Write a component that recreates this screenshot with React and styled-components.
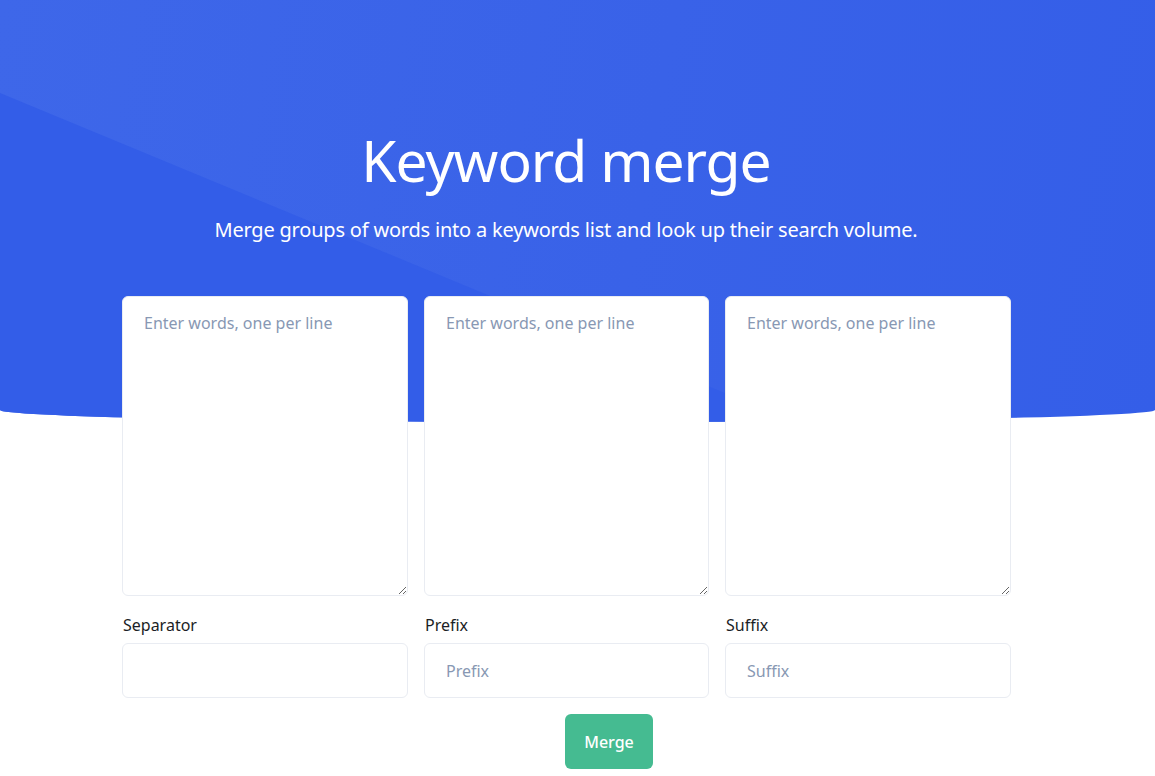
import React from "react";
import styled, { createGlobalStyle } from "styled-components";

const GlobalStyle = createGlobalStyle`
  html, body {
    margin: 0;
    padding: 0;
    background: #ffffff;
  }
  body {
    font-family: "Noto Sans", "Liberation Sans", sans-serif;
    color: #1f2430;
  }
  * { box-sizing: border-box; }
`;

const Page = styled.div`
  position: relative;
  min-height: 776px;
  overflow: hidden;
`;

const Hero = styled.header`
  position: relative;
  height: 422px;
  padding: 124px 23px 0 0;
  text-align: center;
  color: #ffffff;
  background: linear-gradient(100deg, #3e67e9 0%, #3962e8 55%, #345ee8 100%);
  border-radius: 0 0 50% 50% / 0 0 12px 12px;
  overflow: hidden;

  &::before {
    content: "";
    position: absolute;
    inset: 0;
    background: #335de8;
    clip-path: polygon(0 93px, 68.8% 100%, 0 100%);
  }
`;

const HeroText = styled.div`
  position: relative;
`;

const Title = styled.h1`
  margin: 0;
  font-size: 57px;
  line-height: 72px;
  font-weight: 400;
  letter-spacing: -1px;
`;

const Subtitle = styled.p`
  margin: 20px 0 0;
  font-size: 20px;
  line-height: 28px;
  font-weight: 400;
  letter-spacing: -0.2px;
`;

const Form = styled.form`
  position: relative;
  width: 888px;
  margin: -126px 0 0 122px;
`;

const Columns = styled.div`
  display: grid;
  grid-template-columns: 286px 285px 286px;
  column-gap: 16px;
`;

const Field = styled.div`
  display: flex;
  flex-direction: column;
`;

const WordsBox = styled.textarea`
  display: block;
  width: 100%;
  height: 300px;
  padding: 14px 21px;
  border: 1px solid #e9ecf2;
  border-radius: 6px;
  background: #ffffff;
  font-family: inherit;
  font-size: 16px;
  line-height: 24px;
  color: #1f2430;
  resize: vertical;
  outline: none;

  &::placeholder {
    color: #8898b3;
  }
`;

const Label = styled.label`
  margin: 18px 0 0 1px;
  font-size: 16px;
  line-height: 22px;
  color: #1b1e25;
`;

const TextInput = styled.input`
  display: block;
  width: 100%;
  height: 55px;
  margin-top: 7px;
  padding: 0 21px;
  border: 1px solid #e9ecf2;
  border-radius: 6px;
  background: #ffffff;
  font-family: inherit;
  font-size: 16px;
  color: #1f2430;
  outline: none;

  &::placeholder {
    color: #8898b3;
  }
`;

const Actions = styled.div`
  display: flex;
  padding: 16px 0 0 443px;
`;

const MergeButton = styled.button`
  width: 88px;
  height: 55px;
  border: none;
  border-radius: 6px;
  background: #45bb91;
  color: #ffffff;
  font-family: inherit;
  font-size: 16px;
  font-weight: 500;
  cursor: pointer;
`;

const groups = [0, 1, 2];

const extras = [
  { id: "separator", label: "Separator", placeholder: "" },
  { id: "prefix", label: "Prefix", placeholder: "Prefix" },
  { id: "suffix", label: "Suffix", placeholder: "Suffix" },
];

export default function App() {
  return (
    <Page>
      <GlobalStyle />
      <Hero>
        <HeroText>
          <Title>Keyword merge</Title>
          <Subtitle>
            Merge groups of words into a keywords list and look up their search volume.
          </Subtitle>
        </HeroText>
      </Hero>
      <Form onSubmit={(e) => e.preventDefault()}>
        <Columns>
          {groups.map((g) => (
            <WordsBox key={g} placeholder="Enter words, one per line" />
          ))}
          {extras.map((f) => (
            <Field key={f.id}>
              <Label htmlFor={f.id}>{f.label}</Label>
              <TextInput id={f.id} placeholder={f.placeholder} />
            </Field>
          ))}
        </Columns>
        <Actions>
          <MergeButton type="submit">Merge</MergeButton>
        </Actions>
      </Form>
    </Page>
  );
}
